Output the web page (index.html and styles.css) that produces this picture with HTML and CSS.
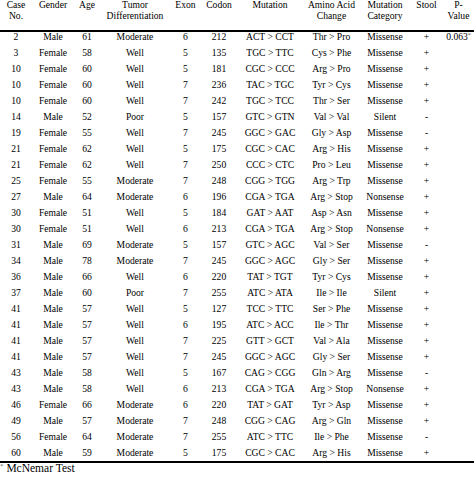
FILE: index.html
```html
<!DOCTYPE html>
<html>
<head>
<meta charset="utf-8">
<link rel="stylesheet" href="styles.css">
</head>
<body>
<div class="page">
<table class="data">
<colgroup>
<col class="c1"><col class="c2"><col class="c3"><col class="c4"><col class="c5"><col class="c6"><col class="c7"><col class="c8"><col class="c9"><col class="c10"><col class="c11">
</colgroup>
<thead>
<tr>
<th>Case<br>No.</th><th>Gender</th><th>Age</th><th>Tumor<br>Differentiation</th><th>Exon</th><th>Codon</th><th>Mutation</th><th>Amino Acid<br>Change</th><th>Mutation<br>Category</th><th>Stool</th><th>P-<br>Value</th>
</tr>
</thead>
<tbody>
<tr><td>2</td><td>Male</td><td>61</td><td>Moderate</td><td>6</td><td>212</td><td>ACT &gt; CCT</td><td>Thr &gt; Pro</td><td>Missense</td><td>+</td><td>0.063<sup class="ast">*</sup></td></tr>
<tr><td>3</td><td>Female</td><td>58</td><td>Well</td><td>5</td><td>135</td><td>TGC &gt; TTC</td><td>Cys &gt; Phe</td><td>Missense</td><td>+</td><td></td></tr>
<tr><td>10</td><td>Female</td><td>60</td><td>Well</td><td>5</td><td>181</td><td>CGC &gt; CCC</td><td>Arg &gt; Pro</td><td>Missense</td><td>+</td><td></td></tr>
<tr><td>10</td><td>Female</td><td>60</td><td>Well</td><td>7</td><td>236</td><td>TAC &gt; TGC</td><td>Tyr &gt; Cys</td><td>Missense</td><td>+</td><td></td></tr>
<tr><td>10</td><td>Female</td><td>60</td><td>Well</td><td>7</td><td>242</td><td>TGC &gt; TCC</td><td>Thr &gt; Ser</td><td>Missense</td><td>+</td><td></td></tr>
<tr><td>14</td><td>Male</td><td>52</td><td>Poor</td><td>5</td><td>157</td><td>GTC &gt; GTN</td><td>Val &gt; Val</td><td>Silent</td><td>-</td><td></td></tr>
<tr><td>19</td><td>Female</td><td>55</td><td>Well</td><td>7</td><td>245</td><td>GGC &gt; GAC</td><td>Gly &gt; Asp</td><td>Missense</td><td>-</td><td></td></tr>
<tr><td>21</td><td>Female</td><td>62</td><td>Well</td><td>5</td><td>175</td><td>CGC &gt; CAC</td><td>Arg &gt; His</td><td>Missense</td><td>+</td><td></td></tr>
<tr><td>21</td><td>Female</td><td>62</td><td>Well</td><td>7</td><td>250</td><td>CCC &gt; CTC</td><td>Pro &gt; Leu</td><td>Missense</td><td>+</td><td></td></tr>
<tr><td>25</td><td>Female</td><td>55</td><td>Moderate</td><td>7</td><td>248</td><td>CGG &gt; TGG</td><td>Arg &gt; Trp</td><td>Missense</td><td>+</td><td></td></tr>
<tr><td>27</td><td>Male</td><td>64</td><td>Moderate</td><td>6</td><td>196</td><td>CGA &gt; TGA</td><td>Arg &gt; Stop</td><td>Nonsense</td><td>+</td><td></td></tr>
<tr><td>30</td><td>Female</td><td>51</td><td>Well</td><td>5</td><td>184</td><td>GAT &gt; AAT</td><td>Asp &gt; Asn</td><td>Missense</td><td>+</td><td></td></tr>
<tr><td>30</td><td>Female</td><td>51</td><td>Well</td><td>6</td><td>213</td><td>CGA &gt; TGA</td><td>Arg &gt; Stop</td><td>Nonsense</td><td>+</td><td></td></tr>
<tr><td>31</td><td>Male</td><td>69</td><td>Moderate</td><td>5</td><td>157</td><td>GTC &gt; AGC</td><td>Val &gt; Ser</td><td>Missense</td><td>-</td><td></td></tr>
<tr><td>34</td><td>Male</td><td>78</td><td>Moderate</td><td>7</td><td>245</td><td>GGC &gt; AGC</td><td>Gly &gt; Ser</td><td>Missense</td><td>+</td><td></td></tr>
<tr><td>36</td><td>Male</td><td>66</td><td>Well</td><td>6</td><td>220</td><td>TAT &gt; TGT</td><td>Tyr &gt; Cys</td><td>Missense</td><td>+</td><td></td></tr>
<tr><td>37</td><td>Male</td><td>60</td><td>Poor</td><td>7</td><td>255</td><td>ATC &gt; ATA</td><td>Ile &gt; Ile</td><td>Silent</td><td>+</td><td></td></tr>
<tr><td>41</td><td>Male</td><td>57</td><td>Well</td><td>5</td><td>127</td><td>TCC &gt; TTC</td><td>Ser &gt; Phe</td><td>Missense</td><td>+</td><td></td></tr>
<tr><td>41</td><td>Male</td><td>57</td><td>Well</td><td>6</td><td>195</td><td>ATC &gt; ACC</td><td>Ile &gt; Thr</td><td>Missense</td><td>+</td><td></td></tr>
<tr><td>41</td><td>Male</td><td>57</td><td>Well</td><td>7</td><td>225</td><td>GTT &gt; GCT</td><td>Val &gt; Ala</td><td>Missense</td><td>+</td><td></td></tr>
<tr><td>41</td><td>Male</td><td>57</td><td>Well</td><td>7</td><td>245</td><td>GGC &gt; AGC</td><td>Gly &gt; Ser</td><td>Missense</td><td>+</td><td></td></tr>
<tr><td>43</td><td>Male</td><td>58</td><td>Well</td><td>5</td><td>167</td><td>CAG &gt; CGG</td><td>Gln &gt; Arg</td><td>Missense</td><td>-</td><td></td></tr>
<tr><td>43</td><td>Male</td><td>58</td><td>Well</td><td>6</td><td>213</td><td>CGA &gt; TGA</td><td>Arg &gt; Stop</td><td>Nonsense</td><td>+</td><td></td></tr>
<tr><td>46</td><td>Female</td><td>66</td><td>Moderate</td><td>6</td><td>220</td><td>TAT &gt; GAT</td><td>Tyr &gt; Asp</td><td>Missense</td><td>+</td><td></td></tr>
<tr><td>49</td><td>Male</td><td>57</td><td>Moderate</td><td>7</td><td>248</td><td>CGG &gt; CAG</td><td>Arg &gt; Gln</td><td>Missense</td><td>+</td><td></td></tr>
<tr><td>56</td><td>Female</td><td>64</td><td>Moderate</td><td>7</td><td>255</td><td>ATC &gt; TTC</td><td>Ile &gt; Phe</td><td>Missense</td><td>-</td><td></td></tr>
<tr class="last"><td>60</td><td>Male</td><td>59</td><td>Moderate</td><td>5</td><td>175</td><td>CGC &gt; CAC</td><td>Arg &gt; His</td><td>Missense</td><td>+</td><td></td></tr>
</tbody>
</table>
<p class="note"><sup class="note-ast">*</sup> McNemar Test</p>
</div>
</body>
</html>
```
FILE: styles.css
```css
html, body {
  margin: 0;
  padding: 0;
  background: #ffffff;
}

.page {
  width: 474px;
  margin-top: -1.5px;
  font-family: "Liberation Serif", "Times New Roman", serif;
  color: #000000;
}

.data {
  width: 474px;
  table-layout: fixed;
  border-collapse: separate;
  border-spacing: 0;
  font-family: "Liberation Serif", "Times New Roman", serif;
  font-size: 9.6px;
}

.c1 { width: 32px; }
.c2 { width: 42px; }
.c3 { width: 26px; }
.c4 { width: 70px; }
.c5 { width: 31px; }
.c6 { width: 36px; }
.c7 { width: 66px; }
.c8 { width: 57px; }
.c9 { width: 50px; }
.c10 { width: 33px; }
.c11 { width: 31px; }

.data th {
  font-family: "Liberation Serif", "Times New Roman", serif;
  font-weight: normal;
  vertical-align: top;
  text-align: center;
  line-height: 11px;
  padding: 0 0 9.5px 0;
  border-bottom: 2px solid #000;
  white-space: nowrap;
}

.data td {
  font-family: "Liberation Serif", "Times New Roman", serif;
  text-align: center;
  line-height: 10px;
  padding: 0 0 6px 0;
  white-space: nowrap;
}

.data tr.last td {
  padding-bottom: 3px;
  border-bottom: 2px solid #000;
}

.ast {
  font-size: 6px;
  vertical-align: 3px;
  line-height: 0;
  color: #444;
}

.note {
  margin: 0;
  font-family: "Liberation Serif", "Times New Roman", serif;
  font-size: 11.5px;
  line-height: 11px;
  white-space: nowrap;
}

.note-ast {
  font-size: 7px;
  vertical-align: 4px;
  line-height: 0;
  color: #666;
}
```
